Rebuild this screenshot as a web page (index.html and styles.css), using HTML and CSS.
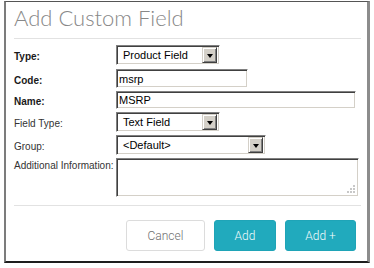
FILE: index.html
```html
<!DOCTYPE html>
<html lang="en">
<head>
    <meta charset="UTF-8">
    <meta name="viewport" content="width=device-width, initial-scale=1.0">
    <title>Add Custom Field</title>
    <link rel="stylesheet" href="styles.css">
</head>
<body>
    <div class="dialog">
        <h1 class="title">Add Custom Field</h1>
        <div class="rule"></div>

        <div class="form">
            <div class="row row-type">
                <label class="label strong">Type:</label>
                <div class="select w-type">
                    <span class="select-text">Product Field</span>
                    <span class="select-btn"><span class="arrow"></span></span>
                </div>
            </div>
            <div class="row row-code">
                <label class="label strong" for="code">Code:</label>
                <input class="field w-code" id="code" type="text" value="msrp">
            </div>
            <div class="row row-name">
                <label class="label strong" for="name">Name:</label>
                <input class="field w-name" id="name" type="text" value="MSRP">
            </div>
            <div class="row row-ftype">
                <label class="label">Field Type:</label>
                <div class="select w-type">
                    <span class="select-text">Text Field</span>
                    <span class="select-btn"><span class="arrow"></span></span>
                </div>
            </div>
            <div class="row row-group">
                <label class="label">Group:</label>
                <div class="select w-group">
                    <span class="select-text">&lt;Default&gt;</span>
                    <span class="select-btn"><span class="arrow"></span></span>
                </div>
            </div>
            <div class="row row-info">
                <label class="label" for="info">Additional Information:</label>
                <div class="area-wrap">
                    <textarea class="field area" id="info"></textarea>
                    <svg class="grip" width="9" height="9" viewBox="0 0 9 9">
                        <rect x="6" y="0" width="2" height="2" fill="#c8c8c8"/>
                        <rect x="3" y="3" width="2" height="2" fill="#c8c8c8"/>
                        <rect x="6" y="3" width="2" height="2" fill="#c8c8c8"/>
                        <rect x="0" y="6" width="2" height="2" fill="#c8c8c8"/>
                        <rect x="3" y="6" width="2" height="2" fill="#c8c8c8"/>
                        <rect x="6" y="6" width="2" height="2" fill="#c8c8c8"/>
                    </svg>
                </div>
            </div>
        </div>

        <div class="rule rule-bottom"></div>

        <div class="actions">
            <button class="btn btn-cancel">Cancel</button>
            <button class="btn btn-primary btn-add">Add</button>
            <button class="btn btn-primary btn-addmore">Add +</button>
        </div>
    </div>
</body>
</html>
```

FILE: styles.css
```css
body {
    margin: 0;
    background: #fff;
    font-family: 'Liberation Sans', Arial, sans-serif;
}
.dialog {
    box-sizing: border-box;
    width: 366px;
    margin: 1px 0 0 4px;
    padding: 0 6px 10px 8px;
    border-top: 1px solid #555;
    border-left: 2px solid #7c7c7c;
    border-right: 3px solid #8c8c8c;
    border-bottom: 2px solid #1e1e1e;
    background: #fff;
}
.title {
    margin: 3px 0 0;
    font-family: 'Lato', 'Open Sans', sans-serif;
    font-weight: 300;
    font-size: 22px;
    line-height: 26px;
    color: #888;
}
.rule {
    height: 1px;
    margin-top: 7px;
    background: #e2e2e2;
}
.rule-bottom {
    margin-top: 8px;
}
.form {
    display: flex;
    flex-direction: column;
    gap: 3px;
    margin-top: 6px;
}
.row {
    display: flex;
    align-items: center;
}
.row-type {
    margin-bottom: 1px;
}
.row-info {
    align-items: flex-start;
}
.label {
    width: 102px;
    flex: none;
    font-size: 10px;
    color: #333;
    padding-top: 3px;
}
.label.strong {
    font-weight: bold;
    color: #1a1a1a;
}
.row-info .label {
    padding-top: 2px;
}

/* classic sunken boxes */
.field,
.select {
    box-sizing: border-box;
    border: 1px solid;
    border-color: #808080 #fff #fff #808080;
    box-shadow: inset 1px 1px 0 #404040, inset -1px -1px 0 #d4d0c8;
    background: #fff;
    font-family: 'Liberation Sans', Arial, sans-serif;
    font-size: 11px;
    color: #000;
    margin: 0;
    outline: none;
}
.field {
    padding: 0 2px;
}
.w-code {
    width: 132px;
    height: 19px;
}
.w-name {
    width: 240px;
    height: 18px;
}
.select {
    display: flex;
    align-items: center;
    height: 20px;
    padding: 2px;
}
.w-type {
    width: 104px;
}
.w-group {
    width: 150px;
}
.select-text {
    flex: 1;
    padding-left: 4px;
}
.select-btn {
    box-sizing: border-box;
    width: 15px;
    height: 16px;
    display: flex;
    align-items: center;
    justify-content: center;
    background: #d4d0c8;
    border: 1px solid;
    border-color: #d4d0c8 #404040 #404040 #d4d0c8;
    box-shadow: inset 1px 1px 0 #fff, inset -1px -1px 0 #808080;
}
.arrow {
    width: 0;
    height: 0;
    border-left: 3px solid transparent;
    border-right: 3px solid transparent;
    border-top: 4px solid #000;
    margin-top: 1px;
}
.area-wrap {
    position: relative;
    width: 243px;
    height: 39px;
}
.area {
    display: block;
    width: 243px;
    height: 39px;
    resize: none;
}
.grip {
    position: absolute;
    right: 3px;
    bottom: 3px;
}

.actions {
    display: flex;
    justify-content: flex-end;
    gap: 9px;
    margin-top: 14px;
    padding-right: 5px;
}
.btn {
    box-sizing: border-box;
    height: 31px;
    border-radius: 3px;
    font-family: 'Roboto', sans-serif;
    font-weight: 300;
    font-size: 12px;
    cursor: pointer;
}
.btn-cancel {
    width: 79px;
    background: #fff;
    border: 1px solid #dcdcdc;
    color: #6f6f6f;
}
.btn-primary {
    background: #21aabd;
    border: 1px solid #1fa4b7;
    color: #f2fbfc;
}
.btn-add {
    width: 62px;
}
.btn-addmore {
    width: 71px;
}
```
